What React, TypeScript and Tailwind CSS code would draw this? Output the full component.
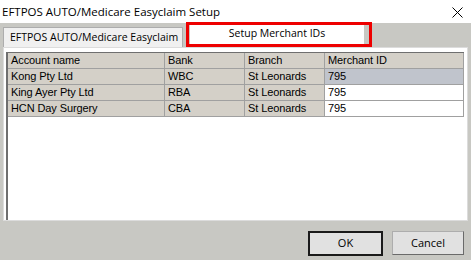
import React from 'react';

const rows = [
  { name: 'Kong Pty Ltd', bank: 'WBC', branch: 'St Leonards', id: '795' },
  { name: 'King Ayer Pty Ltd', bank: 'RBA', branch: 'St Leonards', id: '795' },
  { name: 'HCN Day Surgery', bank: 'CBA', branch: 'St Leonards', id: '795' },
];

const cell = 'h-[16px] pl-[3px] leading-[15px] border-r border-b border-[#a0a0a0] truncate';
const ui = { fontFamily: '"Open Sans", sans-serif' };

const App: React.FC = () => {
  return (
    <div
      className="w-[471px] h-[260px] flex flex-col bg-[#c8c8c3] text-black overflow-hidden"
      style={{ fontFamily: '"Liberation Sans", Arial, sans-serif' }}
    >
      {/* Title bar */}
      <div className="h-[23px] bg-white flex items-center justify-between pl-[2px] pr-[8px]">
        <span className="text-[11.5px] leading-none whitespace-nowrap" style={ui}>
          EFTPOS AUTO/Medicare Easyclaim Setup
        </span>
        <svg width="11" height="11" viewBox="0 0 11 11" className="mt-[1px]">
          <path d="M0.5 0.5 L10.5 10.5 M10.5 0.5 L0.5 10.5" stroke="#000" strokeWidth="1" />
        </svg>
      </div>

      {/* Tabs */}
      <div className="flex items-end pl-[3px] h-[24px]">
        <div className="h-[20px] w-[180px] bg-[#f0f0f0] border border-b-0 border-[#adadad] flex items-center pl-[6px] text-[10.5px] whitespace-nowrap" style={ui}>
          EFTPOS AUTO/Medicare Easyclaim
        </div>
        <div className="ml-[3px] h-[25px] w-[186px] border-[3px] border-[#ee0000] pl-[1px] pr-[5px] flex">
          <div className="flex-1 bg-white flex items-center justify-center text-[10.5px] whitespace-nowrap pb-[1px]" style={ui}>
            Setup Merchant IDs
          </div>
        </div>
      </div>

      {/* Panel */}
      <div className="mx-[3px] h-[174px] bg-white border border-[#dcdcdc] pl-[2px] pt-[4px] pr-[2px] flex">
        <div className="flex-1 flex flex-col border-l-[2px] border-t border-[#6f6f6f] bg-white text-[11px] tracking-[-0.1px]">
          <div className="grid grid-cols-[157px_80px_80px_139px] bg-[#d4d0c8]">
            <div className={cell}>Account name</div>
            <div className={cell}>Bank</div>
            <div className={cell}>Branch</div>
            <div className={cell}>Merchant ID</div>
          </div>
          {rows.map((r, i) => (
            <div key={i} className="grid grid-cols-[157px_80px_80px_139px]">
              <div className={`${cell} bg-[#d4d0c8]`}>{r.name}</div>
              <div className={`${cell} bg-[#d4d0c8]`}>{r.bank}</div>
              <div className={`${cell} bg-[#d4d0c8]`}>{r.branch}</div>
              <div className={`${cell} ${i === 0 ? 'bg-[#c0c4cc]' : 'bg-white'}`}>{r.id}</div>
            </div>
          ))}
        </div>
        <div className="w-[1px] bg-[#dcdcdc] ml-[1px]" />
      </div>

      {/* Buttons */}
      <div className="flex justify-end gap-[9px] pr-[7px] pt-[10px]">
        <button className="w-[75px] h-[25px] bg-[#e1e1e1] border-[2px] border-[#1a1a1a] text-[11px]" style={ui}>
          OK
        </button>
        <button className="w-[72px] h-[24px] bg-[#e1e1e1] border border-[#adadad] border-r-[#6a6a6a] border-b-[#6a6a6a] text-[11px]" style={ui}>
          Cancel
        </button>
      </div>
    </div>
  );
};

export default App;
